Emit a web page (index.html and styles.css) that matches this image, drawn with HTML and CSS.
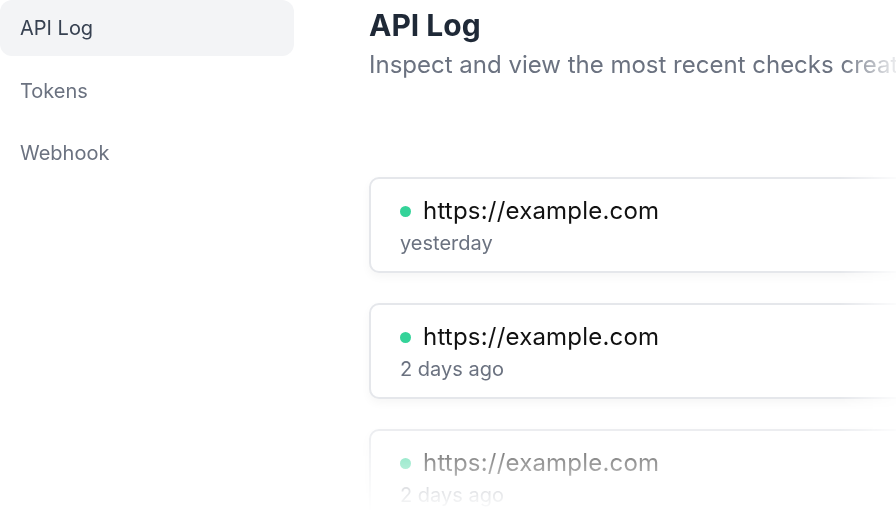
FILE: index.html
```html
<!DOCTYPE html>
<html lang="en">
<head>
<meta charset="utf-8">
<title>API Log</title>
<link rel="stylesheet" href="styles.css">
</head>
<body>
<div class="fade-bottom">
  <div class="fade-right">
    <div class="layout">
      <nav class="sidebar">
        <a class="nav-item active">API Log</a>
        <a class="nav-item">Tokens</a>
        <a class="nav-item">Webhook</a>
      </nav>
      <main class="main">
        <h1 class="title">API Log</h1>
        <p class="subtitle">Inspect and view the most recent checks created through the API</p>
        <ul class="log-list">
          <li class="log-card">
            <div class="log-url"><span class="dot"></span>https://example.com</div>
            <div class="log-time">yesterday</div>
          </li>
          <li class="log-card">
            <div class="log-url"><span class="dot"></span>https://example.com</div>
            <div class="log-time">2 days ago</div>
          </li>
          <li class="log-card">
            <div class="log-url"><span class="dot"></span>https://example.com</div>
            <div class="log-time">2 days ago</div>
          </li>
        </ul>
      </main>
    </div>
  </div>
</div>
</body>
</html>
```
FILE: styles.css
```css
* { box-sizing: border-box; }

html, body {
  margin: 0;
  padding: 0;
  background: #ffffff;
  overflow: hidden;
}

body {
  font-family: Inter, "Noto Sans", "Liberation Sans", sans-serif;
  width: 896px;
  height: 512px;
}

.fade-bottom {
  width: 896px;
  height: 512px;
  overflow: hidden;
  -webkit-mask-image: linear-gradient(to bottom, #000 400px, transparent 512px);
  mask-image: linear-gradient(to bottom, #000 400px, transparent 512px);
}

.fade-right {
  width: 896px;
  height: 512px;
  overflow: hidden;
  -webkit-mask-image: linear-gradient(to right, #000 840px, transparent 905px);
  mask-image: linear-gradient(to right, #000 840px, transparent 905px);
}

.layout {
  display: flex;
  width: 1200px;
  gap: 75px;
}

.sidebar {
  width: 294px;
  flex: none;
  display: flex;
  flex-direction: column;
  gap: 6.5px;
}

.nav-item {
  display: block;
  padding: 14px 20px;
  font-size: 20px;
  line-height: 28px;
  color: #6b7280;
  border-radius: 12px;
  text-decoration: none;
}

.nav-item.active {
  background: #f3f4f6;
  color: #374151;
}

.main {
  flex: 1;
  min-width: 0;
}

.title {
  margin: 7px 0 0;
  font-size: 30px;
  line-height: 36px;
  font-weight: 700;
  color: #1f2937;
}

.subtitle {
  margin: 6px 0 0;
  font-size: 24px;
  line-height: 32px;
  color: #6b7280;
  white-space: nowrap;
}

.log-list {
  list-style: none;
  margin: 96px 0 0;
  padding: 0;
  display: flex;
  flex-direction: column;
  gap: 30px;
}

.log-card {
  background: #ffffff;
  border: 2px solid #e5e7eb;
  border-radius: 10px;
  padding: 16px 29px 14px;
  box-shadow: 0 4px 10px rgba(0, 0, 0, 0.04);
}

.log-url {
  display: flex;
  align-items: center;
  gap: 12px;
  font-size: 24px;
  line-height: 32px;
  letter-spacing: 0.2px;
  color: #111111;
}

.dot {
  width: 11px;
  height: 11px;
  border-radius: 50%;
  background: #34d399;
  flex: none;
}

.log-time {
  margin-top: 2px;
  font-size: 20px;
  line-height: 28px;
  color: #6b7280;
}
```
